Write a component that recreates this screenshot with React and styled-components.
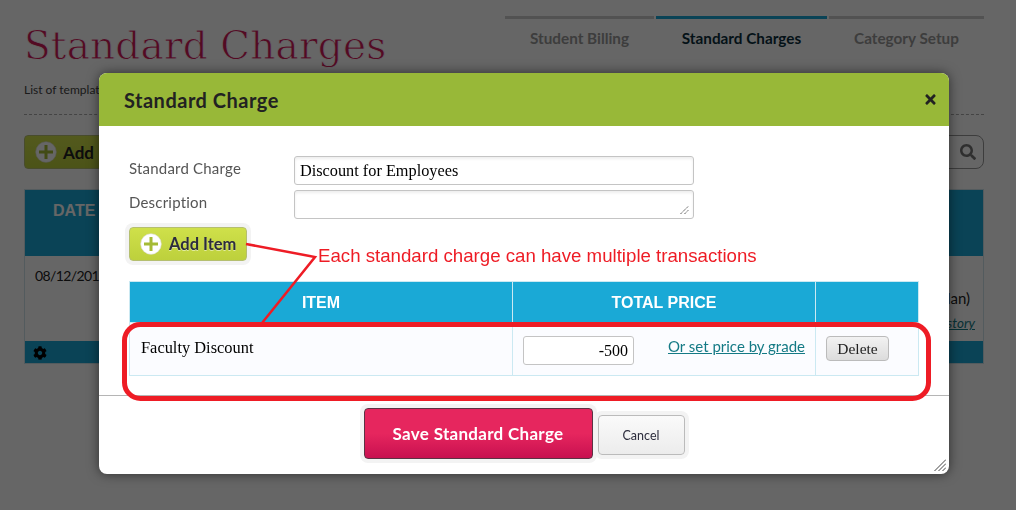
import React from "react";
import styled, { createGlobalStyle } from "styled-components";
import { FaCog, FaSearch, FaTimes } from "react-icons/fa";

const Global = createGlobalStyle`
  html, body { margin: 0; padding: 0; background: #fff; height: 510px; overflow: hidden; }
  * { box-sizing: border-box; }
  body { font-family: Lato, "Open Sans", sans-serif; color: #333; }
`;

const Page = styled.div`
  width: 1016px;
  height: 510px;
  padding: 16px 32px 0 24px;
  overflow: hidden;
`;
const TopRow = styled.div`
  display: flex;
  justify-content: space-between;
  align-items: flex-start;
  height: 99px;
  border-bottom: 1px dashed #aaa;
`;
const TitleBlock = styled.div`
  padding-top: 5px;
`;
const Title = styled.h1`
  margin: 0;
  font: 400 39px/50px "DejaVu Serif", serif;
  letter-spacing: 0.15px;
  color: #d01a58;
  -webkit-text-stroke: 0.8px #fff;
`;
const Subtitle = styled.p`
  margin: 11px 0 0;
  font-size: 12px;
  line-height: 16px;
  color: #444;
`;
const Tabs = styled.nav`
  display: flex;
  gap: 2px;
`;
const Tab = styled.a`
  width: ${(p) => p.$w}px;
  height: 40px;
  border-top: 3px solid ${(p) => (p.$active ? "#1aa9d6" : "#ccc")};
  padding-top: 11px;
  text-align: center;
  font-size: 15.3px;
  line-height: 17px;
  font-weight: 700;
  color: ${(p) => (p.$active ? "#0b2f3d" : "#999")};
`;
const Toolbar = styled.div`
  display: flex;
  justify-content: space-between;
  margin-top: 20px;
  height: 34px;
`;
const PageAdd = styled.div`
  width: 160px;
  display: flex;
  align-items: center;
  gap: 6px;
  padding-left: 10px;
  border: 1px solid #b5bf70;
  border-radius: 4px;
  background: linear-gradient(#cfe04a, #bdd03c);
  font-size: 17px;
  font-weight: 700;
  color: #222;
`;
const SearchBox = styled.div`
  width: 200px;
  display: flex;
  justify-content: flex-end;
  align-items: center;
  padding-right: 7px;
  border: 1px solid #999;
  border-radius: 8px;
  color: #777;
  font-size: 16px;
`;
const BgTable = styled.div`
  margin-top: 20px;
  border: 1px solid #cfe3ea;
`;
const BgHead = styled.div`
  height: 66px;
  padding: 11px 28px;
  background: #1aa9d6;
  font: 700 16px/20px "Liberation Sans", sans-serif;
  color: #fff;
`;
const BgRow = styled.div`
  height: 85px;
  padding: 11px 8px 0 10px;
  display: flex;
  justify-content: space-between;
  font-size: 14px;
  color: #222;
`;
const BgDate = styled.span`
  letter-spacing: -0.6px;
`;
const BgNote = styled.div`
  padding-top: 19px;
  text-align: right;
  line-height: 25px;
`;
const BgPlan = styled.div`
  margin-right: 5px;
  font-size: 15px;
`;
const BgHistory = styled.div`
  font-size: 13.5px;
  font-style: italic;
  text-decoration: underline;
  color: #147a85;
`;
const BgFoot = styled.div`
  height: 22px;
  padding: 5px 8px;
  background: #1aa9d6;
  font-size: 14px;
  color: #000;
`;

const Overlay = styled.div`
  position: fixed;
  inset: 0;
  background: rgba(0, 0, 0, 0.6);
`;
const Modal = styled.div`
  position: absolute;
  left: 99px;
  top: 73px;
  width: 850px;
  height: 401px;
  background: #fff;
  border-radius: 8px;
  box-shadow: 0 0 12px rgba(0, 0, 0, 0.55);
  overflow: hidden;
`;
const ModalHeader = styled.header`
  height: 53px;
  display: flex;
  align-items: center;
  justify-content: space-between;
  padding: 0 11px 0 25px;
  background: #98b838;
`;
const ModalTitle = styled.h2`
  margin: 0;
  font-size: 20px;
  font-weight: 700;
  letter-spacing: 0.5px;
  color: #222;
`;
const Close = styled.span`
  display: flex;
  font-size: 15px;
  color: #222;
`;
const ModalBody = styled.div`
  height: 270px;
  padding: 30px 30px 0;
  border-bottom: 1px solid #b5b5b5;
`;
const FieldRow = styled.div`
  display: flex;
  margin-bottom: 5px;
`;
const FieldLabel = styled.label`
  width: 165px;
  padding-top: 3px;
  font-size: 15px;
  letter-spacing: 0.2px;
  line-height: 18px;
  color: #555;
`;
const TextInput = styled.input`
  width: 400px;
  height: 29px;
  padding: 0 5px;
  border: 1px solid #c4c4c4;
  border-radius: 3px;
  box-shadow: inset 0 2px 3px rgba(0, 0, 0, 0.07);
  font: 16.3px "Liberation Serif", serif;
  color: #000;
`;
const AreaWrap = styled.div`
  position: relative;
  width: 400px;
  height: 29px;
`;
const TextArea = styled.textarea`
  display: block;
  width: 100%;
  height: 100%;
  resize: none;
  border: 1px solid #c4c4c4;
  border-radius: 3px;
  box-shadow: inset 0 2px 3px rgba(0, 0, 0, 0.07);
`;
const AreaGrip = styled.svg`
  position: absolute;
  right: 5px;
  bottom: 5px;
`;
const AddItem = styled.button`
  display: flex;
  align-items: center;
  gap: 7px;
  width: 118px;
  height: 34px;
  margin-top: 8px;
  padding: 0 0 0 10px;
  border: 1px solid #b5bf70;
  border-radius: 4px;
  background: linear-gradient(#cfe04a, #bdd03c);
  box-shadow: 0 0 0 4px #f3f3f3;
  font-family: Lato, sans-serif;
  font-size: 16.5px;
  font-weight: 700;
  color: #2c2c3c;
  text-shadow: 0 1px 0 rgba(255, 255, 255, 0.5);
`;
const ItemTable = styled.table`
  width: 789px;
  margin-top: 20px;
  border-collapse: collapse;
  table-layout: fixed;
`;
const Th = styled.th`
  height: 41px;
  padding: 1px 0 0;
  background: #1aa9d6;
  border: 1px solid #cbe9f2;
  border-bottom: 0;
  font: 700 16px "Liberation Sans", sans-serif;
  color: #fff;
`;
const Td = styled.td`
  height: 53px;
  padding: 0 10px;
  vertical-align: top;
  background: #fbfcff;
  border: 1px solid #cbe9f2;
`;
const ItemName = styled.div`
  margin-top: 16px;
  padding-left: 1px;
  font: 16.4px/18px "Liberation Serif", serif;
  color: #000;
`;
const PriceCell = styled.div`
  display: flex;
  justify-content: space-between;
  margin-top: 13px;
`;
const PriceInput = styled.input`
  width: 111px;
  height: 29px;
  padding: 0 5px;
  border: 1px solid #c4c4c4;
  border-radius: 3px;
  text-align: right;
  font: 16px "Liberation Serif", serif;
  color: #000;
`;
const GradeLink = styled.a`
  margin-top: 1px;
  font-size: 15px;
  line-height: 18px;
  color: #147a85;
  text-decoration: underline;
`;
const DeleteButton = styled.button`
  width: 63px;
  height: 25px;
  margin-top: 13px;
  padding: 0;
  border: 1px solid #bbb;
  border-radius: 4px;
  background: linear-gradient(#f2f2f2, #dcdcdc);
  font: 15.5px "Liberation Serif", serif;
  color: #222;
`;
const ModalFooter = styled.footer`
  display: flex;
  align-items: center;
  justify-content: center;
  gap: 5px;
  height: 78px;
  padding-bottom: 3px;
`;
const SaveButton = styled.button`
  width: 229px;
  height: 51px;
  border: 1px solid #5c3344;
  border-radius: 4px;
  background: linear-gradient(#e6265e 50%, #c81050);
  box-shadow: 0 0 0 4px #f3f3f3;
  font-family: Lato, sans-serif;
  font-size: 17px;
  letter-spacing: 0.3px;
  font-weight: 700;
  color: #fff;
`;
const CancelButton = styled.button`
  width: 87px;
  height: 40px;
  margin-top: 3px;
  border: 1px solid #bbb;
  border-radius: 4px;
  background: linear-gradient(#fafafa, #ececec);
  box-shadow: 0 0 0 4px #f3f3f3;
  font-family: Lato, sans-serif;
  font-size: 12.5px;
  color: #2c2c3c;
`;
const Grip = styled.svg`
  position: absolute;
  right: 3px;
  bottom: 3px;
`;
const Marks = styled.svg`
  position: absolute;
  inset: 0;
  pointer-events: none;
`;
const Callout = styled.div`
  position: absolute;
  left: 318px;
  top: 245px;
  font: 18.67px/21px "Liberation Sans", sans-serif;
  color: #ee1c25;
  white-space: nowrap;
`;

const PlusIcon = ({ size = 22, fg = "#a5bb35" }) => (
  <svg width={size} height={size} viewBox="0 0 22 22">
    <circle cx="11" cy="11" r="10.3" fill="#fff" stroke="#ddd" strokeWidth="0.6" />
    <path d="M9.5 4h3v5.5H18v3h-5.5V18h-3v-5.5H4v-3h5.5z" fill={fg} />
  </svg>
);

export default function App() {
  return (
    <>
      <Global />
      <Page>
        <TopRow>
          <TitleBlock>
            <Title>Standard Charges</Title>
            <Subtitle>List of templates</Subtitle>
          </TitleBlock>
          <Tabs>
            <Tab $w={149}>Student Billing</Tab>
            <Tab $w={171} $active>Standard Charges</Tab>
            <Tab $w={155}>Category Setup</Tab>
          </Tabs>
        </TopRow>
        <Toolbar>
          <PageAdd>
            <PlusIcon />
            Add
          </PageAdd>
          <SearchBox>
            <FaSearch />
          </SearchBox>
        </Toolbar>
        <BgTable>
          <BgHead>DATE</BgHead>
          <BgRow>
            <BgDate>08/12/2013</BgDate>
            <BgNote>
              <BgPlan>Plan)</BgPlan>
              <BgHistory>History</BgHistory>
            </BgNote>
          </BgRow>
          <BgFoot>
            <FaCog />
          </BgFoot>
        </BgTable>
      </Page>
      <Overlay />
      <Modal>
        <ModalHeader>
          <ModalTitle>Standard Charge</ModalTitle>
          <Close>
            <FaTimes />
          </Close>
        </ModalHeader>
        <ModalBody>
          <FieldRow>
            <FieldLabel>Standard Charge</FieldLabel>
            <TextInput defaultValue="Discount for Employees" />
          </FieldRow>
          <FieldRow>
            <FieldLabel>Description</FieldLabel>
            <AreaWrap>
              <TextArea />
              <AreaGrip width="9" height="8" viewBox="0 0 9 8">
                <path d="M0.5 8 8.5 0M4.5 8 8.5 4" stroke="#555" strokeWidth="1" strokeDasharray="1.4 0.6" />
              </AreaGrip>
            </AreaWrap>
          </FieldRow>
          <AddItem>
            <PlusIcon />
            Add Item
          </AddItem>
          <ItemTable>
            <colgroup>
              <col style={{ width: 383 }} />
              <col style={{ width: 303 }} />
              <col style={{ width: 103 }} />
            </colgroup>
            <thead>
              <tr>
                <Th>ITEM</Th>
                <Th>TOTAL PRICE</Th>
                <Th />
              </tr>
            </thead>
            <tbody>
              <tr>
                <Td>
                  <ItemName>Faculty Discount</ItemName>
                </Td>
                <Td>
                  <PriceCell>
                    <PriceInput defaultValue="-500" />
                    <GradeLink>Or set price by grade</GradeLink>
                  </PriceCell>
                </Td>
                <Td>
                  <DeleteButton>Delete</DeleteButton>
                </Td>
              </tr>
            </tbody>
          </ItemTable>
        </ModalBody>
        <ModalFooter>
          <SaveButton>Save Standard Charge</SaveButton>
          <CancelButton>Cancel</CancelButton>
        </ModalFooter>
        <Grip width="12" height="12" viewBox="0 0 12 12">
          <path d="M0.5 12 12 0.5M4.5 12 12 4.5M8.5 12 12 8.5" stroke="#444" strokeWidth="1" />
        </Grip>
      </Modal>
      <Marks width="1016" height="510" viewBox="0 0 1016 510">
        <rect x="124.5" y="324.5" width="804" height="74" rx="16" fill="none" stroke="#ee1c25" strokeWidth="5" />
        <path d="M246 244 315 257 262 323" fill="none" stroke="#ee1c25" strokeWidth="2.5" />
      </Marks>
      <Callout>Each standard charge can have multiple transactions</Callout>
    </>
  );
}
